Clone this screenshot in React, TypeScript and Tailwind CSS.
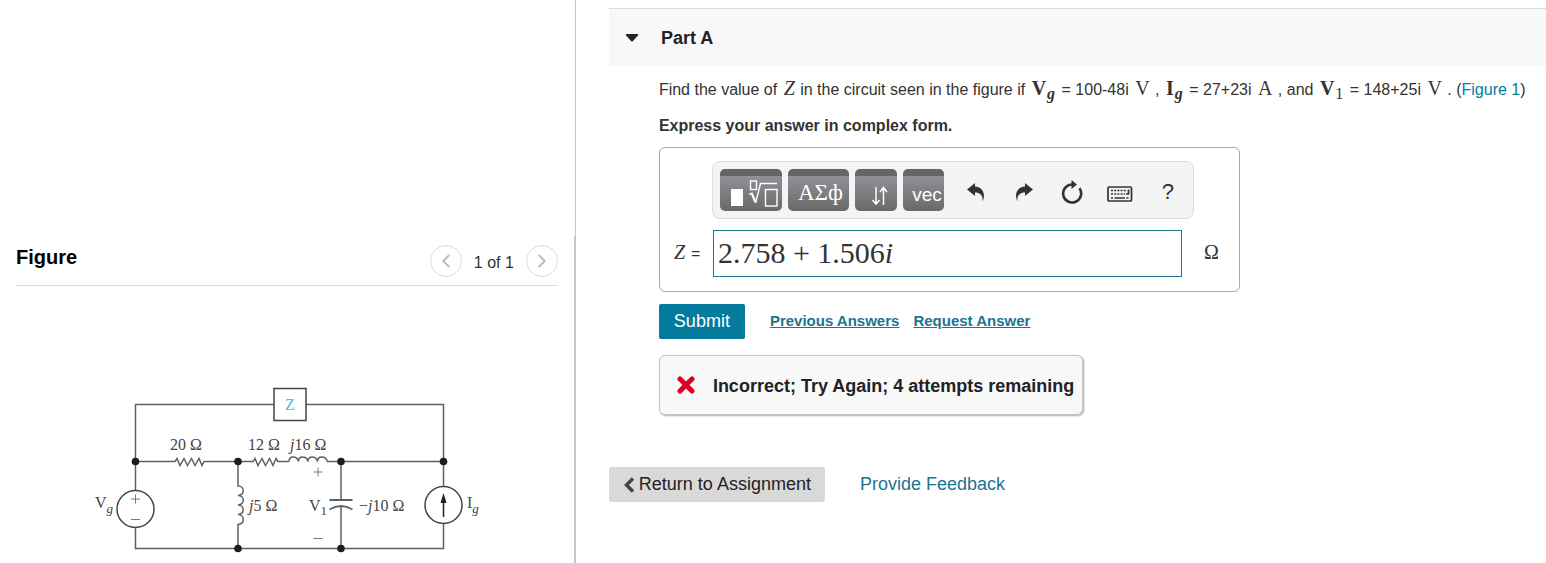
import { useState } from "react";
import type { ReactNode } from "react";
import { ChevronLeft, ChevronRight } from "lucide-react";

type ToolProps = {
  label: string;
  className?: string;
  children: ReactNode;
};

// grey palette button with the dark strip on top
const PaletteButton = ({ label, className, children }: ToolProps) => (
  <button
    type="button"
    aria-label={label}
    className={`flex h-[42px] items-end overflow-hidden rounded-[5px] border-t-7 border-[#666565] bg-linear-to-b from-[#919096] to-[#6a6969] text-white ${className}`}
  >
    {children}
  </button>
);

const IconButton = ({ label, children }: ToolProps) => (
  <button
    type="button"
    aria-label={label}
    className="flex h-6 w-6 items-center justify-center text-[#333]"
  >
    {children}
  </button>
);

const Serif = ({ children }: { children: ReactNode }) => (
  <span className="ml-[2px] font-['Liberation_Serif',serif] text-[20px] leading-none">{children}</span>
);

// a symbol standing alone, with room on its right side too
const Unit = ({ children }: { children: ReactNode }) => (
  <span className="mr-px"><Serif>{children}</Serif></span>
);

const Sub = ({ children }: { children: ReactNode }) => (
  <sub className="mr-[2px] ml-px font-['Liberation_Serif',serif] text-[16px] leading-none">{children}</sub>
);

const Circuit = () => (
  <svg
    viewBox="0 0 400 176"
    className="w-[400px] max-w-full"
    fill="none"
    stroke="#606060"
    strokeWidth="1.5"
    role="img"
    aria-label="Circuit diagram"
  >
    {/* wires */}
    <path d="M184 17.500H45.500V104M45.500 141V161.500H353.500V137M353.500 100V17.500H216" />
    <path d="M45.500 74.500H85l2 -3l3 7l4 -7l3.500 7l4 -7l3.500 7l4 -7l3 7l2 -4H163l2 -3l3 7l4 -7l3.500 7l4 -7l3.500 7l3 -7l2 3H199" />
    <path d="M199 74.500c0-6 8-6 9.500 0c0-6 8-6 9.500 0c0-6 8-6 9.500 0c0-6 8-6 10 0H353.500" />
    <path d="M148 75V99c7 0 7 9 0 9.500c7 0 7 9 0 9.500c7 0 7 9 0 9.500c7 0 7 9 0 10V162" />
    <path d="M251 75V113M251 120V162" />
    <path d="M239.500 113H262.500M239.500 122.500Q251 115.500 262.500 122.500" strokeWidth="1.800" />
    <rect x="184" y="1.500" width="32" height="32" fill="#fff" stroke="#444" />
    <circle cx="45.500" cy="122" r="18.500" stroke="#444" />
    <circle cx="353.500" cy="118" r="18.500" stroke="#444" />
    <path d="M353.500 130V111" stroke="#222" />
    <path d="M353.500 106l3 10h-6z" fill="#222" stroke="none" />
    <path d="M41 112h9M45.500 107.500v9M41 132.500h9M223.500 85h9M228 80.500v9M223.500 151.500h9" stroke="#777" strokeWidth="1" />
    <g fill="#1d1d1d" stroke="none">
      <circle cx="45.500" cy="74.500" r="3.800" />
      <circle cx="148" cy="74.500" r="3.800" />
      <circle cx="251" cy="74.500" r="3.800" />
      <circle cx="353.500" cy="74.500" r="3.800" />
      <circle cx="148" cy="161.500" r="3.800" />
      <circle cx="251" cy="161.500" r="3.800" />
    </g>
    <g fill="#444" stroke="none" className="font-['Liberation_Serif',serif] text-[16px]">
      <text x="80" y="63">20 Ω</text>
      <text x="158" y="63">12 Ω</text>
      <text x="200" y="63"><tspan fontStyle="italic">j</tspan>16 Ω</text>
      <text x="159" y="124"><tspan fontStyle="italic">j</tspan>5 Ω</text>
      <text x="269" y="124">−<tspan fontStyle="italic">j</tspan>10 Ω</text>
      <text x="5" y="121">V<tspan dy="5" fontSize="13" fontStyle="italic">g</tspan></text>
      <text x="219" y="124">V<tspan dy="4" fontSize="13">1</tspan></text>
      <text x="377" y="121">I<tspan dy="5" fontSize="13" fontStyle="italic">g</tspan></text>
      <text x="195" y="23" fill="#3dbfe8">Z</text>
    </g>
  </svg>
);

const FigurePanel = () => (
  <aside className="flex w-[37.25%] shrink-0 flex-col border-r border-[#bccad6] pt-[236px]">
    <section className="flex-1 border-r border-[#bccad6] px-4">
      <div className="flex h-[50px] items-center justify-between border-b border-[#dcdcdc]">
        <h2 className="pb-2 text-[20px] font-bold text-black">Figure</h2>
        <div className="flex items-center gap-3 text-[#333]">
          <button
            type="button"
            aria-label="Previous figure"
            className="flex h-8 w-8 items-center justify-center rounded-full border border-[#ddd] text-[#bbb]"
          >
            <ChevronLeft size={22} />
          </button>
          <span className="pt-1 text-[16px]">1 of 1</span>
          <button
            type="button"
            aria-label="Next figure"
            className="flex h-8 w-8 items-center justify-center rounded-full border border-[#ddd] text-[#bbb]"
          >
            <ChevronRight size={22} />
          </button>
        </div>
      </div>
      <div className="flex justify-center pt-[101px] pl-[6px]">
        <Circuit />
      </div>
    </section>
  </aside>
);

const Toolbar = () => (
  <div className="flex h-[58px] w-[482px] items-center rounded-lg border border-[#dcdcdc] bg-[#f4f4f4] px-[7px]">
    <div className="flex gap-[6px]">
      <PaletteButton label="Templates" className="w-[62px] justify-end pr-1 pb-[3px]">
        <svg width="48" height="28" viewBox="0 0 48 28" fill="none" stroke="#fff" strokeWidth="1.400">
          <rect x="1" y="9" width="12" height="17" fill="#fff" stroke="none" />
          <rect x="20.500" y="1" width="6" height="8.500" />
          <path d="M19 14.500l2.500-1.500" />
          <path d="M21.500 13l4 9" strokeWidth="2.200" />
          <path d="M25.500 23l5-19.500h16.500" />
          <rect x="35.500" y="9.500" width="11.500" height="16.500" />
        </svg>
      </PaletteButton>
      <PaletteButton label="Greek symbols" className="w-[61px] justify-center pb-[2px]">
        <span className="pl-1 font-['Liberation_Serif',serif] text-[23px] leading-8">ΑΣф</span>
      </PaletteButton>
      <PaletteButton label="Arrows" className="w-[42px] justify-center pb-1">
        <svg width="20" height="22" viewBox="0 0 20 22" fill="none" stroke="#fff" strokeWidth="1.500" className="ml-2">
          <path d="M6 2V19M2.500 15L6 19L9.500 15M13.500 20V2.500M10 7L13.500 2.500L17 7" />
        </svg>
      </PaletteButton>
      <PaletteButton label="Vector" className="w-[41px] justify-end pr-[2px]">
        <span className="text-[19px] leading-8">vec</span>
      </PaletteButton>
    </div>
    <div className="ml-5 flex gap-6 pt-1">
      <IconButton label="Undo">
        <svg width="18" height="19" viewBox="0 0 18 19" fill="currentColor">
          <path d="M0 6.500L8 0V3.500C15 4 19 9.500 15.800 18.500C15.800 12 13 9.500 8 9.500V13Z" />
        </svg>
      </IconButton>
      <IconButton label="Redo">
        <svg width="18" height="19" viewBox="0 0 18 19" fill="currentColor">
          <path d="M18 6.500L10 0V3.500C3 4 -1 9.500 2.200 18.500C2.200 12 5 9.500 10 9.500V13Z" />
        </svg>
      </IconButton>
      <IconButton label="Reset">
        <svg width="22" height="24" viewBox="0 0 22 24" fill="none" stroke="currentColor" strokeWidth="2.600">
          <path d="M18.500 8.300A9 9 0 1 1 11 4.500" />
          <path d="M10.500 0L16 4.500L10.500 9z" fill="currentColor" stroke="none" />
        </svg>
      </IconButton>
      <IconButton label="Keyboard shortcuts">
        <svg width="26" height="24" viewBox="0 0 26 24" fill="none" stroke="currentColor" strokeWidth="1.700" className="shrink-0">
          <rect x="1" y="7" width="23.500" height="14" rx="1" />
          <path d="M4 10.500H19M4 14H18" strokeDasharray="2 1.200" />
          <path d="M21.500 9.500V14H19M4 18h2M7.500 18H18M19.500 18h2" />
        </svg>
      </IconButton>
      <IconButton label="Help">
        <span className="text-[22px] leading-6">?</span>
      </IconButton>
    </div>
  </div>
);

const AnswerBox = () => {
  const [answer, setAnswer] = useState("2.758 + 1.506");

  return (
    <div className="mt-[9px] flex h-[145px] w-[581px] max-w-full flex-col gap-[11px] rounded-md border border-[#a9a9a9] pt-[13px]">
      <div className="pl-[52px]">
        <Toolbar />
      </div>
      <div className="flex items-center">
        <label htmlFor="answer" className="w-[53px] pb-1 pl-[14px] text-[#333]">
          <span className="font-['Liberation_Serif',serif] text-[20px] italic">Z</span>
          <span className="pl-[6px] text-[16px]">=</span>
        </label>
        <label
          htmlFor="answer"
          className="flex h-[47px] w-[469px] items-center border border-[#1b7591] pb-[2px] pl-1 font-['Liberation_Serif',serif] text-[30px] text-[#333]"
        >
          <input
            id="answer"
            type="text"
            value={answer}
            onChange={(e) => setAnswer(e.target.value)}
            className="field-sizing-content outline-none"
          />
          <span className="italic">i</span>
        </label>
        <span className="pb-1 pl-[22px] font-['Liberation_Serif',serif] text-[20px] text-[#333]">Ω</span>
      </div>
    </div>
  );
};

const App = () => {
  return (
    <div className="flex min-h-screen bg-white font-['Liberation_Sans',Arial,sans-serif] text-[#333]">
      <FigurePanel />

      <main className="min-w-0 flex-1 pt-2 pl-[33px]">
        <header className="flex h-[58px] items-center gap-[22px] border-t border-[#dcdcdc] bg-[#f8f8f8] pl-4">
          <button type="button" aria-label="Collapse Part A">
            <svg width="14" height="8" viewBox="0 0 14 8" fill="#222">
              <path d="M1.500 0h11q1.500 0 .5 1.200L8 7q-1 1-2 0L1 1.200Q0 0 1.500 0z" />
            </svg>
          </button>
          <h1 className="pt-[2px] text-[18px] font-bold text-[#222]">Part A</h1>
        </header>

        <div className="pt-3 pl-[50px]">
          <p className="h-6 text-[16px] leading-6 whitespace-nowrap">
            Find the value of <Unit><i>Z</i></Unit> in the circuit seen in the figure if{" "}
            <Serif><b>V</b></Serif><Sub><b><i>g</i></b></Sub> = 100-48i <Unit>V</Unit> ,{" "}
            <Serif><b>I</b></Serif><Sub><b><i>g</i></b></Sub> = 27+23i <Unit>A</Unit> , and{" "}
            <Serif><b>V</b></Serif><Sub>1</Sub> = 148+25i <Unit>V</Unit> . (
            <a href="#figure" className="text-[#007fa3]">Figure 1</a>)
          </p>
          <p className="mt-3 text-[16px] leading-6 font-bold">Express your answer in complex form.</p>

          <AnswerBox />

          <div className="mt-3 flex items-center">
            <button type="button" className="h-[35px] w-[86px] rounded-xs bg-[#047a9c] text-[18px] text-white">
              Submit
            </button>
            <a href="#previous" className="ml-[25px] text-[15px] font-bold text-[#1b7591] underline">
              Previous Answers
            </a>
            <a href="#request" className="ml-[14px] text-[15px] font-bold text-[#1b7591] underline">
              Request Answer
            </a>
          </div>

          <div className="mt-4 flex h-[60px] w-[424px] items-center rounded-md border border-[#c4c4c4] bg-[#f8f8f8] pl-[17px] shadow-[1px_1px_2px_#aaa]">
            <svg width="18" height="18" viewBox="0 0 18 18" className="shrink-0" aria-hidden="true">
              <path d="M3 3L15 15M15 3L3 15" stroke="#db0020" strokeWidth="5" strokeLinecap="round" />
            </svg>
            <p className="pt-[2px] pl-[18px] text-[18px] font-bold whitespace-nowrap text-[#222]">
              Incorrect; Try Again; 4 attempts remaining
            </p>
          </div>
        </div>

        <div className="mt-[52px] flex items-center gap-[35px] text-[18px]">
          <button
            type="button"
            className="flex h-[35px] w-[216px] items-center justify-center gap-1 rounded-xs bg-[#d9d9d9] whitespace-nowrap text-[#222]"
          >
            <svg width="12" height="16" viewBox="0 0 12 16" fill="none" aria-hidden="true">
              <path d="M10 1.500L3.500 8L10 14.500" stroke="#444" strokeWidth="3.500" />
            </svg>
            Return to Assignment
          </button>
          <a href="#feedback" className="text-[#1b7591]">Provide Feedback</a>
        </div>
      </main>
    </div>
  );
};

export default App;
